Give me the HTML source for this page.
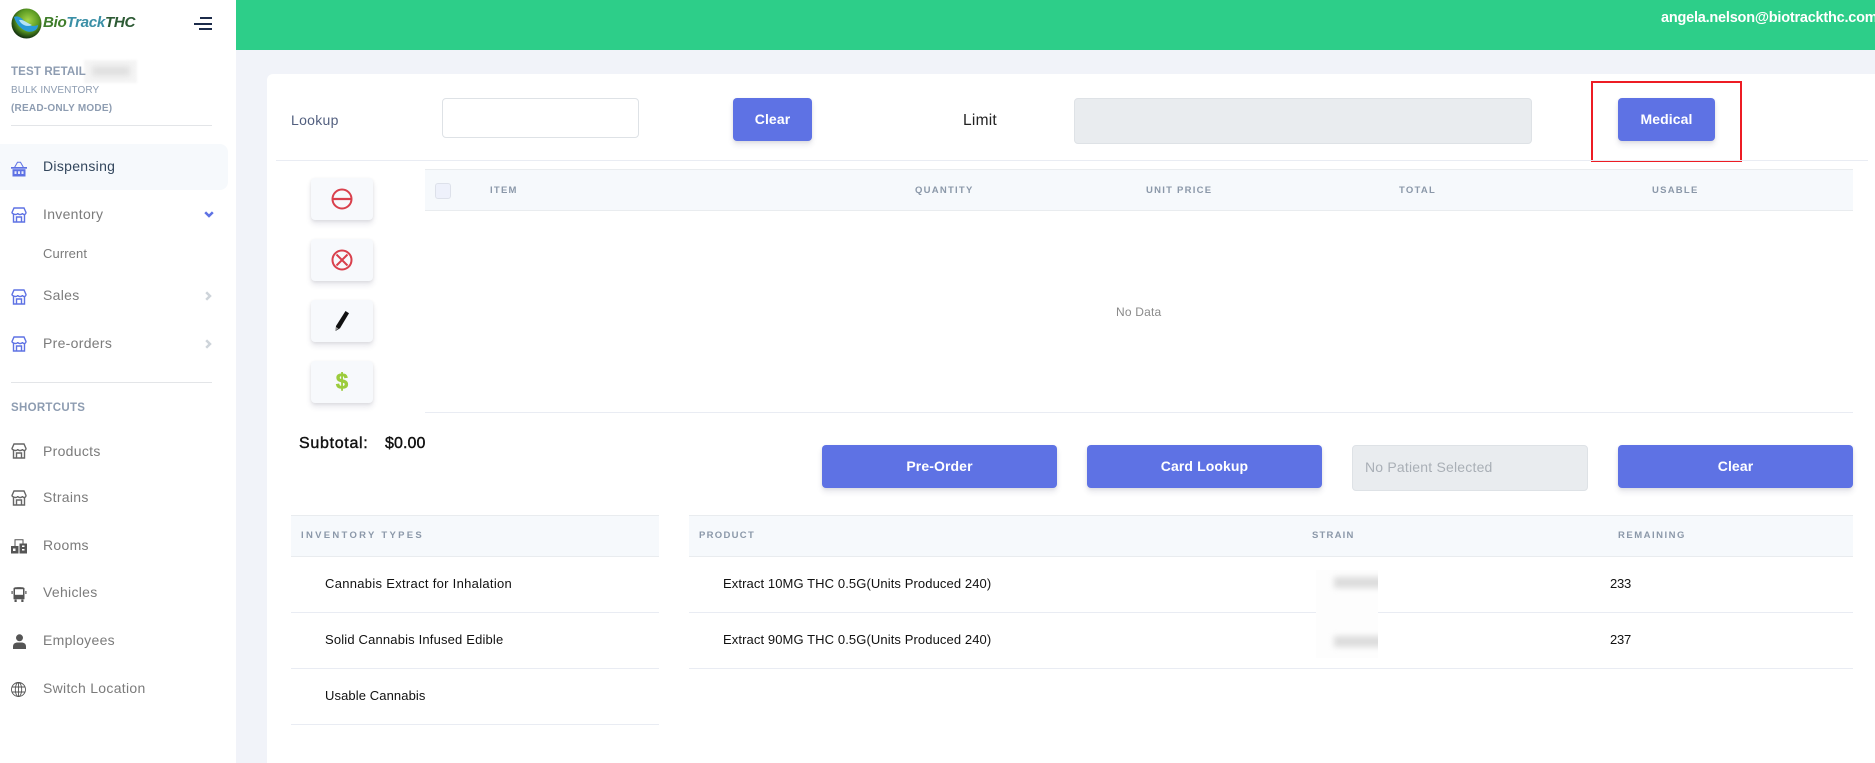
<!DOCTYPE html>
<html><head><meta charset="utf-8"><title>BioTrackTHC</title>
<style>
html,body{margin:0;padding:0;width:1875px;height:763px;overflow:hidden;background:#f1f3f9;font-family:"Liberation Sans",sans-serif}
#root{position:relative;width:1875px;height:763px;overflow:hidden}
.a{position:absolute}
.t{position:absolute;white-space:nowrap;line-height:20px;height:20px;margin-top:-10px}
.nav{font-size:14px;letter-spacing:.3px;color:#7b7b7b}
.th{font-size:9.500px;letter-spacing:1.250px;color:#8b98a9;font-weight:bold}
.td{font-size:13px;letter-spacing:.12px;color:#111}
.btn{position:absolute;background:#5e72e4;border-radius:4px;box-shadow:0 4px 6px rgba(50,50,93,.11),0 1px 3px rgba(0,0,0,.08);color:#fff;font-size:14px;font-weight:bold;text-align:center;letter-spacing:.1px}
.ab{position:absolute;left:311px;width:62px;height:42px;background:#f7f9fc;border-radius:4px;box-shadow:0 4px 6px rgba(50,50,93,.11),0 1px 3px rgba(0,0,0,.08)}
.line{position:absolute;height:1px;background:#e9ecf3}
.head{position:absolute;background:#f6f9fc;border-top:1px solid #e9ecef;border-bottom:1px solid #e9ecef;box-sizing:border-box}
svg{position:absolute;overflow:visible}
</style></head><body><div id="root">

<!-- sidebar -->
<div class="a" style="left:0;top:0;width:236px;height:763px;background:#fff"></div>
<div class="a" style="left:236px;top:0;width:1639px;height:50px;background:#2dce89"></div>
<div class="t" style="left:1661px;top:18px;font-size:14.500px;font-weight:bold;color:#fff;letter-spacing:-.22px">angela.nelson@biotrackthc.com</div>

<!-- logo -->
<svg style="left:11px;top:8px" width="31" height="31" viewBox="0 0 31 31">
<defs><radialGradient id="g1" cx=".55" cy=".4" r=".6"><stop offset="0" stop-color="#a6d64a"/><stop offset=".6" stop-color="#5a9a22"/><stop offset="1" stop-color="#12300f"/></radialGradient></defs>
<circle cx="15.500" cy="15.500" r="15" fill="url(#g1)"/>
<path d="M3 9c4-2 8 1 11 5s8 5 13 3c0 6-7 8-12 6S5 16 3 9z" fill="#2a9bd8"/>
<path d="M8 12c4-1 8 3 13 5-4 2-10 1-13-5z" fill="#b5e4f6"/>
</svg>
<div class="t" style="left:43px;top:23px;font-size:15.200px;font-weight:bold;font-style:italic;color:#3f7d2a;letter-spacing:-.35px">Bio<span style="color:#3a8fa6">Track</span><span style="color:#2d5a35">THC</span></div>

<div class="a" style="left:200px;top:17px;width:12px;height:2px;background:#1c2b4a"></div>
<div class="a" style="left:194px;top:23px;width:18px;height:2px;background:#1c2b4a"></div>
<div class="a" style="left:199px;top:28px;width:13px;height:2px;background:#1c2b4a"></div>

<div class="a" style="left:84px;top:60px;width:53px;height:23px;background:#f5f5f5;filter:blur(1px)"></div>
<div class="a" style="left:92px;top:66px;width:38px;height:10px;background:#e0e0e0;filter:blur(3px)"></div>
<div class="t" style="left:11px;top:72px;font-size:11.500px;font-weight:bold;color:#8d9cb1;letter-spacing:.15px">TEST RETAIL</div>
<div class="t" style="left:11px;top:91px;font-size:10px;color:#8d9cb1;letter-spacing:.1px">BULK INVENTORY</div>
<div class="t" style="left:11px;top:109px;font-size:10px;font-weight:bold;color:#8d9cb1;letter-spacing:.22px">(READ-ONLY MODE)</div>
<div class="a" style="left:11px;top:125px;width:201px;height:1px;background:#e3e5e8"></div>

<div class="a" style="left:0;top:144px;width:228px;height:46px;background:#f6f9fc;border-radius:0 8px 8px 0"></div>

<!-- Dispensing icon -->
<svg style="left:11px;top:161px" width="16" height="16" viewBox="0 0 16 16">
<path d="M3.500 6.500L6.500 1.200h3l3 5.300" fill="none" stroke="#5e72e4" stroke-width="1"/>
<path d="M0 6h16v1.700H0z" fill="#5e72e4"/><path d="M1.500 8.200h13v7.300h-13z" fill="#5e72e4"/>
<path d="M3.500 10.300h2v2.700h-2zM7 10.300h2v2.700H7zM10.500 10.300h2v2.700h-2z" fill="#e6e9fb"/>
</svg>
<div class="t nav" style="left:43px;top:166px;color:#32465c">Dispensing</div>

<svg width="0" height="0"><defs>
<g id="store" fill="none" stroke-width="1.400">
<path d="M3 1h10l2 4.500c0 1.400-1 2-1.900 2s-1.700-.6-1.700-1.500c0 .9-1.200 1.500-2.300 1.500S6.800 6.900 6.800 6c0 .9-1.100 1.500-2 1.500S1 6.900 1 5.500z"/>
<path d="M2.500 7.500V15h11V7.500M5.500 15V10h5v5"/>
</g></defs></svg>

<svg style="left:11px;top:207px;stroke:#5e72e4" width="16" height="16" viewBox="0 0 16 16"><use href="#store"/></svg>
<div class="t nav" style="left:43px;top:214px">Inventory</div>
<svg style="left:204px;top:211px" width="10" height="7" viewBox="0 0 10 7"><path d="M1.200 1.200L5 5l3.800-3.800" fill="none" stroke="#5e72e4" stroke-width="2.500"/></svg>
<div class="t nav" style="left:43px;top:254px;font-size:13px;letter-spacing:.1px">Current</div>

<svg style="left:11px;top:289px;stroke:#5e72e4" width="16" height="16" viewBox="0 0 16 16"><use href="#store"/></svg>
<div class="t nav" style="left:43px;top:295px">Sales</div>
<svg style="left:205px;top:291px" width="7" height="10" viewBox="0 0 7 10"><path d="M1.200 1.200L5 5 1.200 8.800" fill="none" stroke="#ced4da" stroke-width="2.500"/></svg>

<svg style="left:11px;top:336px;stroke:#5e72e4" width="16" height="16" viewBox="0 0 16 16"><use href="#store"/></svg>
<div class="t nav" style="left:43px;top:343px">Pre-orders</div>
<svg style="left:205px;top:339px" width="7" height="10" viewBox="0 0 7 10"><path d="M1.200 1.200L5 5 1.200 8.800" fill="none" stroke="#ced4da" stroke-width="2.500"/></svg>

<div class="a" style="left:11px;top:382px;width:201px;height:1px;background:#e3e5e8"></div>
<div class="t" style="left:11px;top:408px;font-size:11.500px;font-weight:bold;color:#8d9cb1;letter-spacing:.3px">SHORTCUTS</div>

<svg style="left:11px;top:443px;stroke:#666" width="16" height="16" viewBox="0 0 16 16"><use href="#store"/></svg>
<div class="t nav" style="left:43px;top:451px">Products</div>
<svg style="left:11px;top:490px;stroke:#666" width="16" height="16" viewBox="0 0 16 16"><use href="#store"/></svg>
<div class="t nav" style="left:43px;top:497px">Strains</div>

<svg style="left:11px;top:539px" width="16" height="15" viewBox="0 0 16 15">
<path d="M0 7h7.500v7.500H0zM8.500 4.500H16v10H8.500z" fill="#555"/>
<path d="M4 7V.8h8V4.500" fill="none" stroke="#555"/>
<path d="M2 9.500h2.500V12H2zM11 6.500h2.500V8H11zM11 10h2.500v1.500H11z" fill="#fff"/>
</svg>
<div class="t nav" style="left:43px;top:545px">Rooms</div>

<svg style="left:11px;top:587px" width="16" height="15" viewBox="0 0 16 15">
<path d="M2.500 1.500c0-1 1.500-1.400 5.500-1.400s5.500.4 5.500 1.400V12.300h-11z" fill="#555"/>
<path d="M4 2.200h8V7.800H4z" fill="#fff"/>
<path d="M.5 4h1.200v3H.5zM14.300 4h1.200v3h-1.200zM3.500 12.500h2.200V15H3.500zM10.300 12.500h2.200V15h-2.200z" fill="#555"/>
</svg>
<div class="t nav" style="left:43px;top:592px">Vehicles</div>

<svg style="left:12px;top:634px" width="15" height="15" viewBox="0 0 15 15">
<circle cx="7.500" cy="3.800" r="3.500" fill="#555"/>
<path d="M1 15v-2.500C1 9.500 3.500 8.500 5.500 8.500h4c2 0 4.500 1 4.500 4V15z" fill="#555"/>
</svg>
<div class="t nav" style="left:43px;top:640px">Employees</div>

<svg style="left:11px;top:682px" width="15" height="15" viewBox="0 0 15 15" fill="none" stroke="#555" stroke-width=".9">
<circle cx="7.500" cy="7.500" r="7"/><ellipse cx="7.500" cy="7.500" rx="3.200" ry="7"/><path d="M7.500.5v14M1 5h13M1 10h13"/>
</svg>
<div class="t nav" style="left:43px;top:688px">Switch Location</div>

<!-- card -->
<div class="a" style="left:267px;top:74px;width:1608px;height:689px;background:#fff;border-radius:6px 0 0 0"></div>

<div class="t" style="left:291px;top:119.500px;font-size:14px;letter-spacing:.3px;color:#525f7f">Lookup</div>
<div class="a" style="left:442px;top:98px;width:197px;height:40px;box-sizing:border-box;border:1px solid #dee2e6;border-radius:4px;background:#fff"></div>
<div class="btn" style="left:733px;top:98px;width:79px;height:43px;line-height:43px">Clear</div>
<div class="t" style="left:963px;top:120.500px;font-size:15.500px;letter-spacing:.25px;color:#222">Limit</div>
<div class="a" style="left:1074px;top:98px;width:458px;height:46px;box-sizing:border-box;background:#e9ecef;border:1px solid #dee2e6;border-radius:4px"></div>
<div class="btn" style="left:1618px;top:98px;width:97px;height:43px;line-height:43px">Medical</div>
<div class="a" style="left:1591px;top:81px;width:151px;height:81px;box-sizing:border-box;border:2px solid #ed1c24"></div>
<div class="line" style="left:276px;top:160px;width:1592px"></div>

<!-- action buttons -->
<div class="ab" style="top:178px"></div>
<svg style="left:331px;top:189px" width="22" height="22" viewBox="0 0 22 22" fill="none" stroke="#d9404c" stroke-width="2"><circle cx="11" cy="10" r="9.500"/><path d="M2 10h18" stroke-width="2.200"/></svg>
<div class="ab" style="top:239px"></div>
<svg style="left:331px;top:250px" width="22" height="22" viewBox="0 0 22 22" fill="none" stroke="#d9404c" stroke-width="2"><circle cx="11" cy="10" r="9.500"/><path d="M5.500 4.500l11 11M16.500 4.500l-11 11"/></svg>
<div class="ab" style="top:300px"></div>
<svg style="left:333px;top:310px" width="18" height="22" viewBox="0 0 18 22"><path d="M12.500 1l3.500 2.300-9 15-4.500 2.700.5-5z" fill="#111"/><path d="M3 17l2.500 1.500-3 2z" fill="#999"/></svg>
<div class="ab" style="top:361px"></div>
<div class="t" style="left:333px;top:382px;width:18px;text-align:center;font-size:22px;font-weight:bold;color:#9ccc3c;-webkit-text-stroke:.6px #9ccc3c">$</div>

<!-- top table -->
<div class="head" style="left:425px;top:169px;width:1428px;height:42px"></div>
<div class="a" style="left:435px;top:183px;width:16px;height:16px;box-sizing:border-box;background:#eef1fb;border:1px solid #dde1ea;border-radius:3px"></div>
<div class="t th" style="left:490px;top:191px">ITEM</div>
<div class="t th" style="left:915px;top:191px">QUANTITY</div>
<div class="t th" style="left:1146px;top:191px">UNIT PRICE</div>
<div class="t th" style="left:1399px;top:191px">TOTAL</div>
<div class="t th" style="left:1652px;top:191px">USABLE</div>
<div class="t" style="left:1116px;top:312px;font-size:12px;color:#8a8a8a;letter-spacing:.2px">No Data</div>
<div class="line" style="left:425px;top:412px;width:1428px"></div>

<div class="t" style="left:299px;top:444px;font-size:16px;color:#111;letter-spacing:.7px;-webkit-text-stroke:.4px #111">Subtotal:</div>
<div class="t" style="left:385px;top:444px;font-size:16px;color:#111;letter-spacing:.1px;-webkit-text-stroke:.4px #111">$0.00</div>

<div class="btn" style="left:822px;top:445px;width:235px;height:43px;line-height:43px">Pre-Order</div>
<div class="btn" style="left:1087px;top:445px;width:235px;height:43px;line-height:43px">Card Lookup</div>
<div class="a" style="left:1352px;top:445px;width:236px;height:46px;box-sizing:border-box;background:#e9ecef;border:1px solid #dee2e6;border-radius:4px"></div>
<div class="t" style="left:1365px;top:467px;font-size:14px;color:#a9afb6;letter-spacing:.2px">No Patient Selected</div>
<div class="btn" style="left:1618px;top:445px;width:235px;height:43px;line-height:43px">Clear</div>

<!-- inventory table -->
<div class="head" style="left:291px;top:515px;width:368px;height:42px"></div>
<div class="t th" style="left:301px;top:536px;letter-spacing:2.300px">INVENTORY TYPES</div>
<div class="t td" style="left:325px;top:584px;letter-spacing:.3px">Cannabis Extract for Inhalation</div>
<div class="line" style="left:291px;top:612px;width:368px"></div>
<div class="t td" style="left:325px;top:640px;letter-spacing:.17px">Solid Cannabis Infused Edible</div>
<div class="line" style="left:291px;top:668px;width:368px"></div>
<div class="t td" style="left:325px;top:696px;letter-spacing:.1px">Usable Cannabis</div>
<div class="line" style="left:291px;top:724px;width:368px"></div>

<!-- product table -->
<div class="head" style="left:689px;top:515px;width:1164px;height:42px"></div>
<div class="t th" style="left:699px;top:536px;letter-spacing:1.300px">PRODUCT</div>
<div class="t th" style="left:1312px;top:536px;letter-spacing:1.200px">STRAIN</div>
<div class="t th" style="left:1618px;top:536px;letter-spacing:1.500px">REMAINING</div>
<div class="t td" style="left:723px;top:584px;letter-spacing:.1px">Extract 10MG THC 0.5G(Units Produced 240)</div>
<div class="line" style="left:689px;top:612px;width:1164px"></div>
<div class="t td" style="left:723px;top:640px;letter-spacing:.1px">Extract 90MG THC 0.5G(Units Produced 240)</div>
<div class="line" style="left:689px;top:668px;width:1164px"></div>
<div class="t td" style="left:1610px;top:584px;letter-spacing:-.2px">233</div>
<div class="t td" style="left:1610px;top:640px;letter-spacing:-.2px">237</div>
<div class="a" style="left:1316px;top:570px;width:62px;height:88px;background:#fdfdfd;overflow:hidden">
<div class="a" style="left:18px;top:7px;width:60px;height:11px;background:#dcdcdc;filter:blur(3px)"></div>
<div class="a" style="left:18px;top:66px;width:60px;height:11px;background:#dcdcdc;filter:blur(3px)"></div>
</div>

</div></body></html>
